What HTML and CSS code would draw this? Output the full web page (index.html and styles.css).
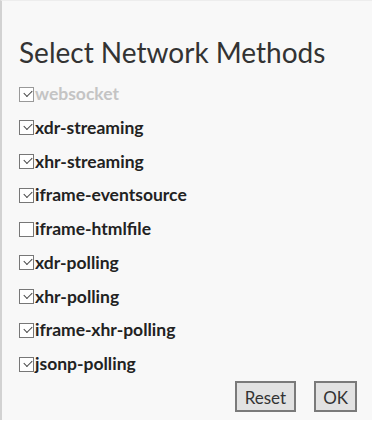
FILE: index.html
```html
<!DOCTYPE html>
<html lang="en">
<head>
    <meta charset="UTF-8" />
    <title>Select Network Methods</title>
    <link rel="stylesheet" href="styles.css">
</head>
<body>
    <div class="panel">
        <h2 class="title">Select Network Methods</h2>
        <div class="methods">
            <label class="method disabled"><input type="checkbox" checked disabled><span>websocket</span></label>
            <label class="method"><input type="checkbox" checked><span>xdr-streaming</span></label>
            <label class="method"><input type="checkbox" checked><span>xhr-streaming</span></label>
            <label class="method"><input type="checkbox" checked><span>iframe-eventsource</span></label>
            <label class="method"><input type="checkbox"><span>iframe-htmlfile</span></label>
            <label class="method"><input type="checkbox" checked><span>xdr-polling</span></label>
            <label class="method"><input type="checkbox" checked><span>xhr-polling</span></label>
            <label class="method"><input type="checkbox" checked><span>iframe-xhr-polling</span></label>
            <label class="method"><input type="checkbox" checked><span>jsonp-polling</span></label>
        </div>
        <div class="actions">
            <button class="btn">Reset</button>
            <button class="btn btn-ok">OK</button>
        </div>
    </div>
</body>
</html>
```

FILE: styles.css
```css
body {
    margin: 0;
    background: #fff;
    font-family: Lato, "Open Sans", sans-serif;
    color: #222;
}

.panel {
    width: 372px;
    height: 420px;
    box-sizing: border-box;
    background: #f8f8f8;
    border-left: 2px solid #d2d2d2;
    border-top: 1px solid #ededed;
    padding: 35px 0 0 17px;
}

.title {
    margin: 0 0 16px;
    font-size: 28px;
    font-weight: normal;
    color: #333;
    line-height: 32px;
}

.methods {
    display: flex;
    flex-direction: column;
    gap: 13.75px;
}

.method {
    display: flex;
    align-items: center;
    font-size: 17.5px;
    font-weight: bold;
    line-height: 20px;
    color: #222;
}

.method.disabled {
    color: #c4c4c4;
}

.method input {
    appearance: none;
    margin: 0 1px 0 0;
    width: 15px;
    height: 15px;
    border: 1px solid #777;
    background: #fff;
    position: relative;
}

.method input:checked::after {
    content: "";
    position: absolute;
    left: 4px;
    top: 2px;
    width: 7px;
    height: 4px;
    border-left: 1px solid #444;
    border-bottom: 1px solid #444;
    transform: rotate(-45deg);
}

.method.disabled input {
    border-color: #999;
}

.actions {
    display: flex;
    justify-content: flex-end;
    gap: 18px;
    margin: 7px 15px 0 0;
}

.btn {
    font-family: inherit;
    font-size: 17px;
    color: #333;
    background: #e2e2e2;
    border: 2px solid #7a7a7a;
    padding: 4px 8px;
    height: 31px;
}

.btn-ok {
    padding: 4px 7px;
}
```
